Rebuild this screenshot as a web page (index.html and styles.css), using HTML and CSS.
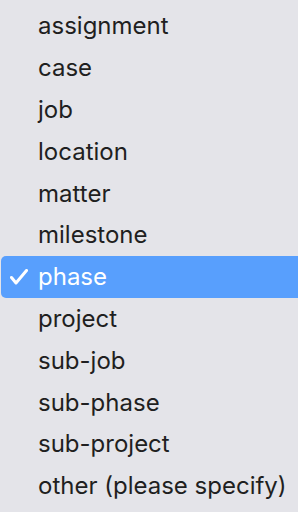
FILE: index.html
```html
<!DOCTYPE html>
<html>
<head>
<meta charset="utf-8">
<link rel="stylesheet" href="styles.css">
</head>
<body>
<ul class="menu">
  <li class="item">assignment</li>
  <li class="item">case</li>
  <li class="item">job</li>
  <li class="item">location</li>
  <li class="item">matter</li>
  <li class="item">milestone</li>
  <li class="item selected"><svg class="check" width="18" height="16" viewBox="0 0 18 16"><path d="M1.5 8.5 L6 14 L16.5 1.5" fill="none" stroke="#fff" stroke-width="3" stroke-linecap="round" stroke-linejoin="round"/></svg>phase</li>
  <li class="item">project</li>
  <li class="item">sub-job</li>
  <li class="item">sub-phase</li>
  <li class="item">sub-project</li>
  <li class="item">other (please specify)</li>
</ul>
</body>
</html>
```
FILE: styles.css
```css
html, body {
  margin: 0;
  padding: 0;
  background: #e4e4e9;
  overflow: hidden;
}
.menu {
  list-style: none;
  margin: 0;
  padding: 5px 0 0 1px;
  font-family: Inter, "Liberation Sans", sans-serif;
  font-size: 24px;
  color: #1f1f21;
}
.item {
  height: 41.8px;
  display: flex;
  align-items: center;
  padding-left: 37px;
  white-space: nowrap;
  box-sizing: border-box;
}
.selected {
  background: #589ffd;
  color: #fff;
  border-radius: 5px 0 0 5px;
  padding-left: 9px;
}
.check {
  width: 18px;
  height: 16px;
  margin-right: 10px;
  flex: none;
}
```
